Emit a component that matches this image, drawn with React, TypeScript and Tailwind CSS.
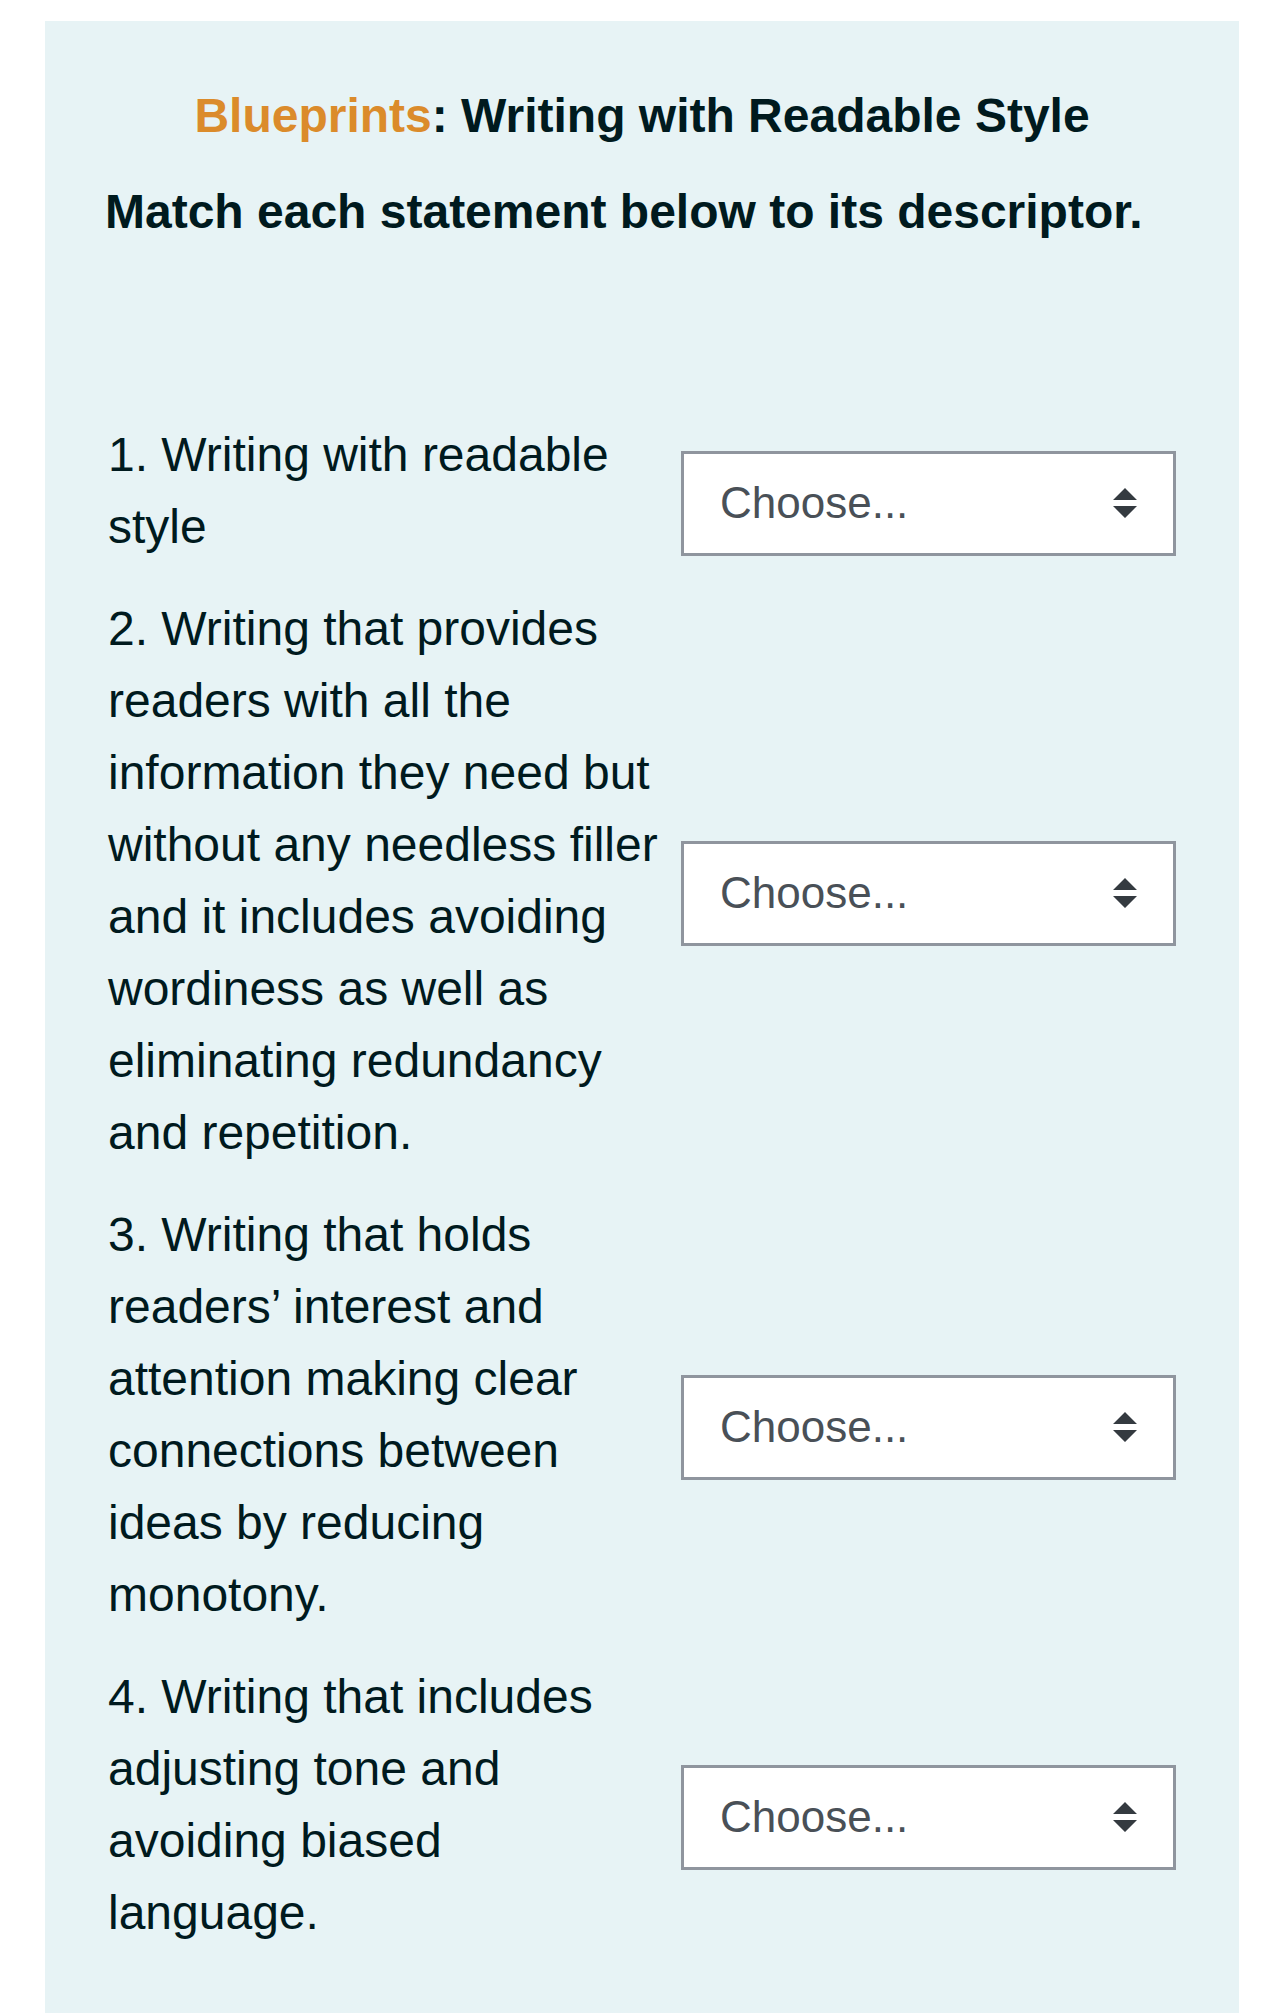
import React from "react";

const statements = [
  "1. Writing with readable style",
  "2. Writing that provides readers with all the information they need but without any needless filler and it includes avoiding wordiness as well as eliminating redundancy and repetition.",
  "3. Writing that holds readers\u2019 interest and attention making clear connections between ideas by reducing monotony.",
  "4. Writing that includes adjusting tone and avoiding biased language.",
];

const ChooseBox: React.FC = () => (
  <div className="flex h-[105px] w-[495px] items-center justify-between border-[3px] border-[#8f959e] bg-white pl-[36px] pr-[36px] text-[44px] text-[#495057]">
    <span>Choose...</span>
    <svg width="24" height="30" viewBox="0 0 4 5" className="shrink-0">
      <path d="M2 0L0 2h4zm0 5L0 3h4z" fill="#343a40" />
    </svg>
  </div>
);

export default function App() {
  return (
    <div className="min-h-screen bg-white px-[45px] pt-[21px] font-['Liberation_Sans',Arial,sans-serif] text-[#001a1e]">
      <div className="bg-[#e7f3f5] px-[60px] pt-[59px] pb-[120px]">
        <p className="text-center text-[48px] font-bold leading-[72px]">
          <span className="text-[#db8b2b]">Blueprints</span>: Writing with Readable Style
        </p>
        <p className="mt-[24px] text-[48px] font-bold leading-[72px]">
          Match each statement below to its descriptor.
        </p>

        <div className="mt-[171px] flex flex-col gap-[30px]">
          {statements.map((s, i) => (
            <div key={i} className="grid grid-cols-[556px_495px] items-center gap-x-[20px]">
              <p className="pl-[3px] text-[48px] leading-[72px]">{s}</p>
              <div className="pt-[24px]">
                <ChooseBox />
              </div>
            </div>
          ))}
        </div>
      </div>
    </div>
  );
}
